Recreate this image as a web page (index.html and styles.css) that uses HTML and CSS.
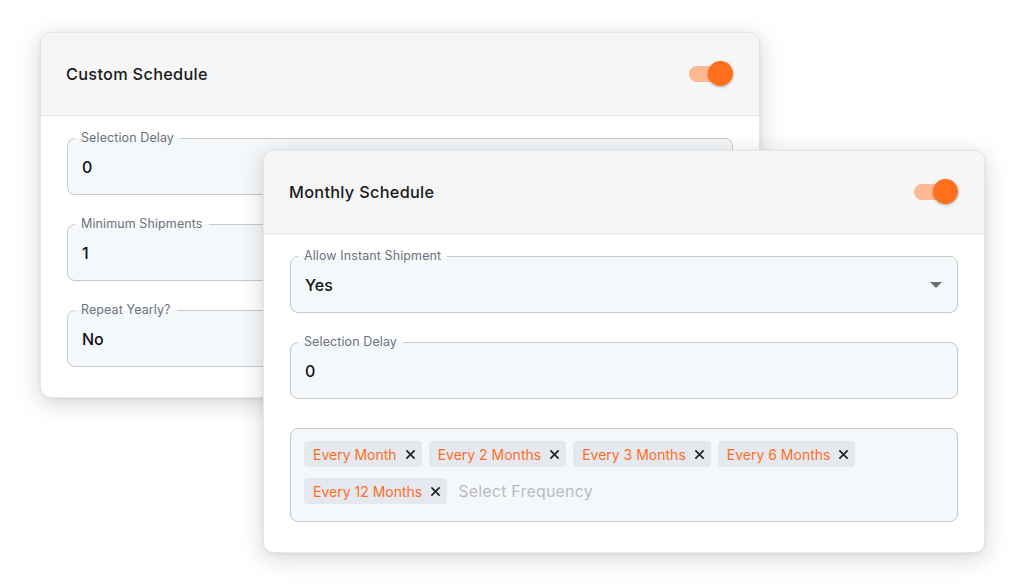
FILE: index.html
```html
<!DOCTYPE html>
<html>
<head>
<meta charset="utf-8">
<link rel="stylesheet" href="styles.css">
</head>
<body>
<div class="canvas">
  <section class="card card-custom">
    <header class="card-head">
      <h2>Custom Schedule</h2>
      <span class="toggle"><span class="track"></span><span class="thumb"></span></span>
    </header>
    <div class="card-body">
      <fieldset class="field"><legend>Selection Delay</legend><div class="value">0</div></fieldset>
      <fieldset class="field"><legend>Minimum Shipments</legend><div class="value">1</div></fieldset>
      <fieldset class="field"><legend>Repeat Yearly?</legend><div class="value">No</div></fieldset>
    </div>
  </section>

  <section class="card card-monthly">
    <header class="card-head">
      <h2>Monthly Schedule</h2>
      <span class="toggle"><span class="track"></span><span class="thumb"></span></span>
    </header>
    <div class="card-body">
      <fieldset class="field"><legend>Allow Instant Shipment</legend>
        <div class="value select">Yes
          <svg class="caret" width="12" height="6" viewBox="0 0 12 6"><path d="M0 0H12L6 6Z" fill="#6b6b6b"/></svg>
        </div>
      </fieldset>
      <fieldset class="field"><legend>Selection Delay</legend><div class="value">0</div></fieldset>
      <div class="chips">
        <span class="chip">Every Month<svg viewBox="0 0 12 12"><path d="M1.5 1.5L10.5 10.5M10.5 1.5L1.5 10.5"/></svg></span>
        <span class="chip">Every 2 Months<svg viewBox="0 0 12 12"><path d="M1.5 1.5L10.5 10.5M10.5 1.5L1.5 10.5"/></svg></span>
        <span class="chip">Every 3 Months<svg viewBox="0 0 12 12"><path d="M1.5 1.5L10.5 10.5M10.5 1.5L1.5 10.5"/></svg></span>
        <span class="chip">Every 6 Months<svg viewBox="0 0 12 12"><path d="M1.5 1.5L10.5 10.5M10.5 1.5L1.5 10.5"/></svg></span>
        <span class="chip">Every 12 Months<svg viewBox="0 0 12 12"><path d="M1.5 1.5L10.5 10.5M10.5 1.5L1.5 10.5"/></svg></span>
        <span class="placeholder">Select Frequency</span>
      </div>
    </div>
  </section>
</div>
</body>
</html>
```

FILE: styles.css
```css
* { box-sizing: border-box; }
html, body { margin: 0; padding: 0; background: #ffffff; }
body {
  font-family: Inter, "Open Sans", "Liberation Sans", sans-serif;
  color: #111111;
  width: 1024px;
  height: 585px;
  overflow: hidden;
}
.canvas { position: relative; width: 1024px; height: 585px; }

.card {
  position: absolute;
  background: #ffffff;
  border: 1px solid #e6e6e6;
  border-radius: 11px;
  box-shadow: 0 5px 24px rgba(0,0,0,0.17), 0 1px 4px rgba(0,0,0,0.06);
  overflow: hidden;
}
.card-custom { left: 40px; top: 32px; width: 720px; height: 366px; }
.card-monthly { left: 263px; top: 150px; width: 722px; height: 403px; }

.card-head {
  height: 83px;
  background: #f6f6f6;
  border-bottom: 1px solid #e7e7e7;
  display: flex;
  align-items: center;
  justify-content: space-between;
  padding: 0 26px 0 25px;
}
.card-head h2 {
  margin: 0;
  font-size: 16.3px;
  font-weight: 500;
  letter-spacing: 0.3px;
  color: #1a1a1a;
}
.toggle { position: relative; width: 44px; height: 26px; display: block; }
.toggle .track {
  position: absolute; left: 0; top: 5px;
  width: 40px; height: 16px;
  border-radius: 8px;
  background: #ffb890;
}
.toggle .thumb {
  position: absolute; right: 0; top: 0;
  width: 25px; height: 25px;
  border-radius: 50%;
  background: #ff6f1c;
  box-shadow: 0 1px 3px rgba(0,0,0,0.3);
}

.card-body {
  padding: 14px 26px 0 26px;
  display: flex;
  flex-direction: column;
  gap: 21px;
}
.field {
  margin: 0;
  border: 1px solid #c9c9c9;
  border-radius: 8px;
  background: #f5f8fb;
  padding: 0 14px 0 14px;
  height: 65px;
  min-width: 0;
}
.field legend {
  padding: 0 6px;
  margin-left: -7px;
  font-size: 12.5px;
  color: #6b7280;
  line-height: 16px;
  letter-spacing: 0.1px;
}
.value {
  font-size: 16px;
  font-weight: 500;
  line-height: 20px;
  padding-top: 11px;
  display: flex;
  align-items: center;
  justify-content: space-between;
}
.select .caret { margin-right: 1px; }

.chips {
  margin-top: 8px;
  border: 1px solid #c9c9c9;
  border-radius: 8px;
  background: #f5f8fb;
  min-height: 94px;
  padding: 12px 13px;
  display: flex;
  flex-wrap: wrap;
  align-items: center;
  gap: 11px 7px;
  align-content: flex-start;
}
.chip {
  display: inline-flex;
  align-items: center;
  height: 26px;
  padding: 0 6px 0 9px;
  background: #e5e9ef;
  border-radius: 4px;
  font-size: 14px;
  color: #ff6d1f;
}
.chip svg {
  width: 11px; height: 11px;
  margin-left: 8px;
  stroke: #222222;
  stroke-width: 1.8;
  fill: none;
}
.placeholder {
  margin-left: 4px;
  font-size: 16px;
  color: #b9bcc2;
  letter-spacing: 0.2px;
}
```
